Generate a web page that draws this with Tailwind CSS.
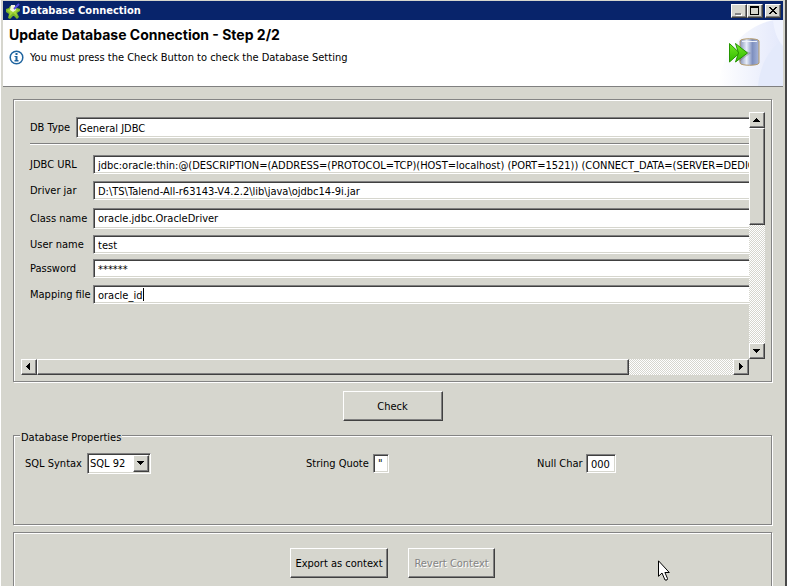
<!DOCTYPE html>
<html lang="en">
<head>
    <meta charset="UTF-8">
    <meta name="viewport" content="width=device-width, initial-scale=1.0">
    <script src="https://cdn.jsdelivr.net/npm/@tailwindcss/browser@4"></script>
    <title>Database Connection</title>
</head>
<body class="bg-[#d6d6ce] text-black text-[11px] leading-[14px] font-['DejaVu_Sans_Condensed','Noto_Sans',sans-serif]">
    <div class="min-h-screen flex flex-col pt-px pl-[2px] pr-[2px] border-l border-l-white border-r-2 border-r-[#484848] overflow-hidden">

        <!-- title bar -->
        <header class="h-[19px] flex items-center bg-[#08246b] text-white pl-[2px] pr-[2px]">
            <svg class="w-4 h-4 shrink-0" viewBox="0 0 16 16">
                <path d="M6 3l1 3 5-1 3 1v2l-3 2 2 4-2 2-3-3-1 0-3 3-2-1 1-4-3-2V6l3-1 1-2z" fill="#7cb728"/>
                <path d="M5 6l-3 1 3 3-1 4 4-4 4 3-1-4 3-2-4-1z" fill="#a5d63a"/>
                <path d="M6 2h4l1 5-3 2-3-2z" fill="#f3f6df"/>
                <path d="M9 6l5-5" stroke="#5a4fe0" stroke-width="2"/>
            </svg>
            <h1 class="ml-px font-bold flex-1">Database Connection</h1>
            <button aria-label="Minimize" class="w-4 h-[14px] bg-[#d6d6ce] border border-t-white border-l-white border-b-[#404040] border-r-[#404040] shadow-[inset_-1px_-1px_0_#808080]">
                <svg class="block w-[14px] h-3" viewBox="0 0 14 12"><path d="M4 9h6v2H4z" fill="#fff"/><path d="M3 8h6v2H3z" fill="#848484"/></svg>
            </button>
            <button aria-label="Maximize" class="w-4 h-[14px] bg-[#d6d6ce] border border-t-white border-l-white border-b-[#404040] border-r-[#404040] shadow-[inset_-1px_-1px_0_#808080]">
                <svg class="block w-[14px] h-3" viewBox="0 0 14 12"><path d="M2 1h9v9H2zM3 3v6h7V3z" fill="#000" fill-rule="evenodd"/></svg>
            </button>
            <button aria-label="Close" class="ml-[2px] w-4 h-[14px] bg-[#d6d6ce] border border-t-white border-l-white border-b-[#404040] border-r-[#404040] shadow-[inset_-1px_-1px_0_#808080]">
                <svg class="block w-[14px] h-3" viewBox="0 0 14 12" shape-rendering="crispEdges"><path d="M3 2h2v1h1v1h2V3h1V2h2v1h-1v1H9v1H8v1h1v1h1v1h1v1H9V8H8V7H6v1H5v1H3V8h1V7h1V6h1V5H5V4H4V3H3z" fill="#000"/></svg>
            </button>
        </header>

        <!-- wizard banner -->
        <section class="h-[67px] flex justify-between bg-white border-b border-[#808080] overflow-hidden">
            <div class="pl-[6px] pt-[7px]">
                <h2 class="font-['Inter',sans-serif] font-bold text-[14px] leading-[16px]">Update Database Connection - Step 2/2</h2>
                <div class="flex items-center gap-[6px] mt-[7px]">
                    <svg class="w-[15px] h-[15px]" viewBox="0 0 15 15">
                        <circle cx="7.5" cy="7.5" r="6.3" fill="#fff" stroke="#1f649f" stroke-width="1.5"/>
                        <path d="M6.500 3h2v2h-2zM5.500 6h3v4h1v1.500h-4V10h1V7h-1z" fill="#1f649f"/>
                    </svg>
                    <p>You must press the Check Button to check the Database Setting</p>
                </div>
            </div>
            <svg class="w-[75px] h-[66px]" viewBox="0 0 75 66">
                <defs>
                    <linearGradient id="haze" x1="0" x2="1" y1="0" y2="0">
                        <stop offset="0" stop-color="#fff"/>
                        <stop offset="1" stop-color="#e3e8fb"/>
                    </linearGradient>
                    <linearGradient id="drum" x1="0" x2="1" y1="0" y2="0">
                        <stop offset="0" stop-color="#8995b8"/>
                        <stop offset=".35" stop-color="#e7edfa"/>
                        <stop offset=".65" stop-color="#7e8fbe"/>
                        <stop offset="1" stop-color="#a7b6dc"/>
                    </linearGradient>
                    <linearGradient id="arrow" x1="0" x2="0" y1="0" y2="1">
                        <stop offset="0" stop-color="#72ea22"/>
                        <stop offset="1" stop-color="#2fb800"/>
                    </linearGradient>
                </defs>
                <path d="M75 0H66C34 6 14 34 10 66h65z" fill="url(#haze)"/>
                <path d="M75 20C62 28 52 44 50 66h25z" fill="#e4eafb"/>
                <path d="M75 0v26C69 20 66 10 65 0z" fill="#f0f3fe"/>
                <path d="M32 21c0-3 19-3 19 0v22c0 3-19 3-19 0z" fill="url(#drum)" stroke="#b49a6b"/>
                <path d="M34 21.500h15" stroke="#eef2fb"/>
                <path d="M31 28l12 5-12 9z" fill="#555" opacity=".3"/>
                <path d="M21.500 23.500l10 9.500-10 9z" fill="url(#arrow)" stroke="#259600"/>
                <path d="M27.500 23.500l12 9.500-12 9 3-9z" fill="url(#arrow)" stroke="#259600"/>
            </svg>
        </section>

        <main class="flex-1 flex flex-col pl-[10px] pr-[11px] pt-3">

            <!-- connection settings -->
            <section class="border border-[#848484] shadow-[1px_1px_0_#fff,inset_1px_1px_0_#fff] pl-[7px] pr-[6px] pt-3 pb-[6px] grid grid-cols-[1fr_16px]">
                <div class="pl-[9px] pt-[5px] pb-[55px] overflow-hidden">
                    <div class="flex items-center">
                        <label for="dbType" class="w-[46px] pt-px whitespace-nowrap">DB Type</label>
                        <input id="dbType" value="General JDBC" class="flex-1 min-w-0 h-[21px] pl-[2px] pt-px bg-white border border-r-0 border-t-[#808080] border-l-[#808080] border-b-white shadow-[inset_1px_1px_0_#404040,inset_0_-1px_0_#d6d6ce] outline-none">
                    </div>
                    <hr class="mt-[5px] h-[2px] border-t border-t-[#808080] bg-white">
                    <div class="flex items-center mt-[10px]">
                        <label for="url" class="w-[63px] pt-px whitespace-nowrap">JDBC URL</label>
                        <input id="url" value="jdbc:oracle:thin:@(DESCRIPTION=(ADDRESS=(PROTOCOL=TCP)(HOST=localhost) (PORT=1521)) (CONNECT_DATA=(SERVER=DEDICATED)))" class="flex-1 min-w-0 h-[19px] pl-1 pt-px bg-white border border-r-0 border-t-[#808080] border-l-[#808080] border-b-white shadow-[inset_1px_1px_0_#404040,inset_0_-1px_0_#d6d6ce] outline-none">
                    </div>
                    <div class="flex items-center mt-[7px]">
                        <label for="jar" class="w-[63px] pt-px whitespace-nowrap">Driver jar</label>
                        <input id="jar" value="D:\TS\Talend-All-r63143-V4.2.2\lib\java\ojdbc14-9i.jar" class="flex-1 min-w-0 h-[19px] pl-1 pt-px bg-white border border-r-0 border-t-[#808080] border-l-[#808080] border-b-white shadow-[inset_1px_1px_0_#404040,inset_0_-1px_0_#d6d6ce] outline-none">
                    </div>
                    <div class="flex items-center mt-2">
                        <label for="className" class="w-[63px] pt-px whitespace-nowrap">Class name</label>
                        <input id="className" value="oracle.jdbc.OracleDriver" class="flex-1 min-w-0 h-[21px] pl-1 bg-white border border-r-0 border-t-[#808080] border-l-[#808080] border-b-white shadow-[inset_1px_1px_0_#404040,inset_0_-1px_0_#d6d6ce] outline-none">
                    </div>
                    <div class="flex items-center mt-[6px]">
                        <label for="user" class="w-[63px] pt-px whitespace-nowrap">User name</label>
                        <input id="user" value="test" class="flex-1 min-w-0 h-[19px] pl-1 pt-px bg-white border border-r-0 border-t-[#808080] border-l-[#808080] border-b-white shadow-[inset_1px_1px_0_#404040,inset_0_-1px_0_#d6d6ce] outline-none">
                    </div>
                    <div class="flex items-center mt-[5px]">
                        <label for="password" class="w-[63px] pt-px whitespace-nowrap">Password</label>
                        <input id="password" value="******" class="flex-1 min-w-0 h-[19px] pl-1 pt-px bg-white border border-r-0 border-t-[#808080] border-l-[#808080] border-b-white shadow-[inset_1px_1px_0_#404040,inset_0_-1px_0_#d6d6ce] outline-none">
                    </div>
                    <div class="relative flex items-center mt-[7px]">
                        <label for="mapping" class="w-[63px] pt-px whitespace-nowrap">Mapping file</label>
                        <input id="mapping" value="oracle_id" class="flex-1 min-w-0 h-[19px] pl-1 pt-px bg-white border border-r-0 border-t-[#808080] border-l-[#808080] border-b-white shadow-[inset_1px_1px_0_#404040,inset_0_-1px_0_#d6d6ce] outline-none">
                        <span class="absolute left-[113px] top-[3px] w-px h-[13px] bg-black"></span>
                    </div>
                </div>

                <!-- vertical scrollbar -->
                <div class="flex flex-col bg-[repeating-conic-gradient(#fff_0_25%,#d6d6ce_0_50%)] bg-[length:2px_2px]">
                    <button aria-label="Scroll up" class="h-4 bg-[#d6d6ce] border border-t-white border-l-white border-b-[#404040] border-r-[#404040] shadow-[inset_-1px_-1px_0_#808080]">
                        <svg class="block w-[14px] h-[14px]" viewBox="0 0 14 14" shape-rendering="crispEdges"><path d="M6 5h1v1h1v1h1v1h1v1H3V8h1V7h1V6h1z"/></svg>
                    </button>
                    <div class="flex-1">
                        <div class="h-[45%] bg-[#d6d6ce] border border-t-white border-l-white border-b-[#404040] border-r-[#404040] shadow-[inset_-1px_-1px_0_#808080]"></div>
                    </div>
                    <button aria-label="Scroll down" class="h-4 bg-[#d6d6ce] border border-t-white border-l-white border-b-[#404040] border-r-[#404040] shadow-[inset_-1px_-1px_0_#808080]">
                        <svg class="block w-[14px] h-[14px]" viewBox="0 0 14 14" shape-rendering="crispEdges"><path d="M3 5h7v1H9v1H8v1H7v1H6V8H5V7H4V6H3z"/></svg>
                    </button>
                </div>

                <!-- horizontal scrollbar -->
                <div class="flex h-4 bg-[repeating-conic-gradient(#fff_0_25%,#d6d6ce_0_50%)] bg-[length:2px_2px]">
                    <button aria-label="Scroll left" class="w-4 bg-[#d6d6ce] border border-t-white border-l-white border-b-[#404040] border-r-[#404040] shadow-[inset_-1px_-1px_0_#808080]">
                        <svg class="block w-[14px] h-[14px]" viewBox="0 0 14 14" shape-rendering="crispEdges"><path d="M8 3v7H7V9H6V8H5V7H4V6h1V5h1V4h1V3z"/></svg>
                    </button>
                    <div class="flex-1">
                        <div class="w-[85%] h-4 bg-[#d6d6ce] border border-t-white border-l-white border-b-[#404040] border-r-[#404040] shadow-[inset_-1px_-1px_0_#808080]"></div>
                    </div>
                    <button aria-label="Scroll right" class="w-4 bg-[#d6d6ce] border border-t-white border-l-white border-b-[#404040] border-r-[#404040] shadow-[inset_-1px_-1px_0_#808080]">
                        <svg class="block w-[14px] h-[14px]" viewBox="0 0 14 14" shape-rendering="crispEdges"><path d="M5 3h1v1h1v1h1v1h1v1H8v1H7v1H6v1H5z"/></svg>
                    </button>
                </div>
            </section>

            <button class="self-center mt-[9px] w-[100px] h-[30px] pt-px border border-t-white border-l-white border-b-[#404040] border-r-[#404040] shadow-[inset_-1px_-1px_0_#808080]">Check</button>

            <!-- database properties -->
            <section aria-labelledby="propsTitle" class="relative mt-[14px] border border-[#848484] shadow-[1px_1px_0_#fff,inset_1px_1px_0_#fff] pl-[11px] pt-[17px] pb-[50px] grid grid-cols-[281fr_231fr_234fr] items-center">
                <h3 id="propsTitle" class="absolute left-[6px] -top-[5px] px-px bg-[#d6d6ce]">Database Properties</h3>
                <div class="flex items-center">
                    <label for="syntax" class="w-[62px] pt-px whitespace-nowrap">SQL Syntax</label>
                    <div class="relative">
                        <select id="syntax" class="block appearance-none w-16 h-[21px] pl-[2px] pt-px bg-white border border-t-[#808080] border-l-[#808080] border-b-white border-r-white shadow-[inset_1px_1px_0_#404040,inset_-1px_-1px_0_#d6d6ce] outline-none">
                            <option>SQL 92</option>
                        </select>
                        <span class="absolute right-[2px] top-[2px] w-4 h-[17px] pointer-events-none bg-[#d6d6ce] border border-t-white border-l-white border-b-[#404040] border-r-[#404040] shadow-[inset_-1px_-1px_0_#808080]">
                            <svg class="block w-[14px] h-[15px]" viewBox="0 0 14 15" shape-rendering="crispEdges"><path d="M3 5h7v1H9v1H8v1H7v1H6V8H5V7H4V6H3z"/></svg>
                        </span>
                    </div>
                </div>
                <div class="flex items-center">
                    <label for="quote" class="w-[67px] pt-px whitespace-nowrap">String Quote</label>
                    <input id="quote" value='"' class="w-4 h-[19px] pl-1 bg-white border border-t-[#808080] border-l-[#808080] border-b-white border-r-white shadow-[inset_1px_1px_0_#404040,inset_-1px_-1px_0_#d6d6ce] outline-none">
                </div>
                <div class="flex items-center">
                    <label for="nullChar" class="w-[49px] pt-px whitespace-nowrap">Null Char</label>
                    <input id="nullChar" value="000" class="w-[30px] h-[19px] pl-1 pt-px bg-white border border-t-[#808080] border-l-[#808080] border-b-white border-r-white shadow-[inset_1px_1px_0_#404040,inset_-1px_-1px_0_#d6d6ce] outline-none">
                </div>
            </section>

            <!-- context buttons -->
            <section class="flex-1 mt-[7px] border border-b-0 border-[#848484] shadow-[1px_1px_0_#fff,inset_1px_1px_0_#fff] pt-[15px] pb-2 flex justify-center items-start gap-5">
                <button class="w-[98px] h-[30px] pt-px whitespace-nowrap border border-t-white border-l-white border-b-[#404040] border-r-[#404040] shadow-[inset_-1px_-1px_0_#808080]">Export as context</button>
                <button disabled class="w-[87px] h-[30px] pt-px whitespace-nowrap text-[#848484] text-shadow-[1px_1px_0_#fff] border border-t-white border-l-white border-b-[#404040] border-r-[#404040] shadow-[inset_-1px_-1px_0_#808080]">Revert Context</button>
            </section>
        </main>
    </div>

    <!-- mouse pointer -->
    <svg class="absolute left-[658px] top-[560px] w-3 h-[21px] pointer-events-none" viewBox="0 0 12 21">
        <path d="M.5.800v15.500l3.500-3.300 3 7h2l.5-1.500-2.600-6h4.400z" fill="#fff" stroke="#000"/>
    </svg>
</body>
</html>
